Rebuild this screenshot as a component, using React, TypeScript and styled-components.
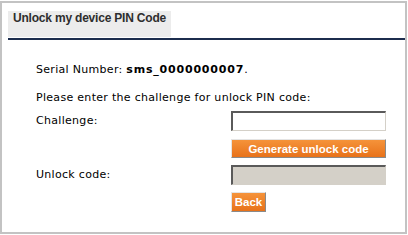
import React from 'react';
import styled, { createGlobalStyle } from 'styled-components';

const Global = createGlobalStyle`
  body {
    margin: 0;
    background: #fff;
  }
`;

const Frame = styled.div`
  box-sizing: border-box;
  width: 407px;
  height: 233px;
  margin-top: 1px;
  border: 2px solid #c3c3c3;
  padding: 8px 0 0 6px;
`;

const Header = styled.div`
  border-bottom: 2px solid #1c2d4e;
  padding-bottom: 1px;
`;

const Tab = styled.div`
  display: inline-block;
  height: 26px;
  line-height: 26px;
  padding: 0 5px 0 5px;
  background: #ececec;
  color: #2e2e2e;
  font: bold 12px 'Liberation Sans', Arial, sans-serif;
  letter-spacing: -0.2px;
  vertical-align: top;
`;

const Body = styled.div`
  padding: 22px 0 0 28px;
  font: 11px 'DejaVu Sans', Verdana, sans-serif;
  letter-spacing: 0.3px;
  color: #000;
`;

const Line = styled.div<{ $gap?: number }>`
  height: 16px;
  line-height: 16px;
  margin-bottom: ${(p) => p.$gap ?? 0}px;
`;

const Serial = styled.b`
  letter-spacing: 0.8px;
`;

const Grid = styled.div`
  display: grid;
  grid-template-columns: 195px 155px;
  row-gap: 7px;
  align-items: center;
`;

const Label = styled.div`
  line-height: 16px;
`;

const Field = styled.input<{ $disabled?: boolean }>`
  box-sizing: border-box;
  width: 155px;
  height: 20px;
  margin: 0;
  padding: 0 3px;
  border-style: solid;
  border-width: 2px 1px 1px 2px;
  border-color: #5a5a5a #d4d0c8 #d4d0c8 #5a5a5a;
  background: ${(p) => (p.$disabled ? '#d4d0c8' : '#fff')};
  outline: none;
`;

const Button = styled.button<{ $wide?: boolean }>`
  box-sizing: border-box;
  width: ${(p) => (p.$wide ? '155px' : '35px')};
  height: ${(p) => (p.$wide ? '19px' : '20px')};
  margin: ${(p) => (p.$wide ? '1px 0 0' : '0')};
  padding: 0;
  border-style: solid;
  border-width: 1px;
  border-color: #e4e4e4 #8a8a8a #8a8a8a #e4e4e4;
  background: linear-gradient(#f5933a, #e8721a);
  color: #fff;
  font: bold 11.5px 'Liberation Sans', Arial, sans-serif;
  cursor: pointer;
`;

export default function App() {
  return (
    <>
      <Global />
      <Frame>
        <Header>
          <Tab>Unlock my device PIN Code</Tab>
        </Header>
        <Body>
          <Line $gap={12}>
            Serial Number: <Serial>sms_0000000007</Serial>.
          </Line>
          <Line $gap={5}>Please enter the challenge for unlock PIN code:</Line>
          <Grid>
            <Label>Challenge:</Label>
            <Field type="text" />
            <span />
            <Button $wide>Generate unlock code</Button>
            <Label>Unlock code:</Label>
            <Field type="text" $disabled disabled />
            <span />
            <Button>Back</Button>
          </Grid>
        </Body>
      </Frame>
    </>
  );
}
